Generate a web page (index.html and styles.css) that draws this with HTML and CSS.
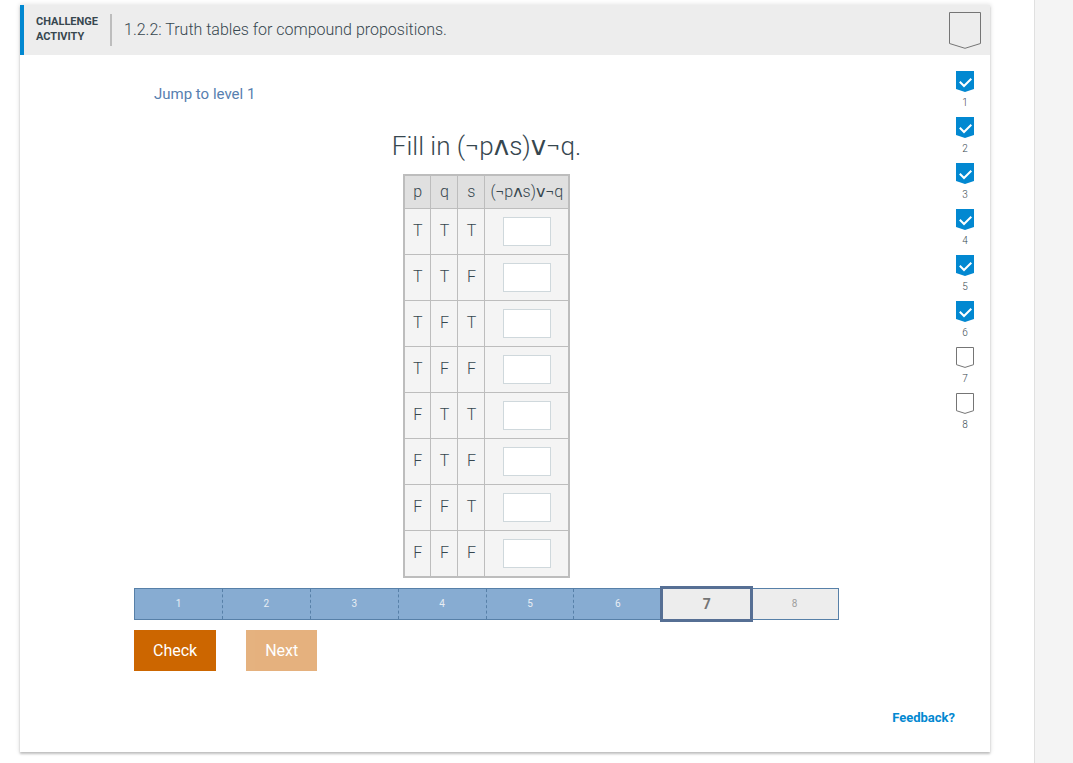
FILE: index.html
```html
<!DOCTYPE html>
<html lang="en">
<head>
    <meta charset="UTF-8" />
    <meta name="viewport" content="width=device-width, initial-scale=1.0" />
    <title>1.2.2: Truth tables for compound propositions</title>
    <link rel="stylesheet" href="styles.css">
</head>
<body>
    <svg class="defs" aria-hidden="true">
        <symbol id="done" viewBox="0 0 18 21">
            <path d="M0 0H18V18L9 21L0 18Z" fill="#0288d1" />
            <path d="M3.800 10.800L8 15L15.300 7.700" fill="none" stroke="#fff" stroke-width="2" />
        </symbol>
        <symbol id="todo" viewBox="0 0 18 21">
            <path d="M0.500 0.500H17.500V17.700L9 20.400L0.500 17.700Z" fill="#fff" stroke="#757575" />
        </symbol>
    </svg>
    <main class="page">
        <section class="card">
            <header class="card-header">
                <div class="label">CHALLENGE<br>ACTIVITY</div>
                <h1 class="title">1.2.2: Truth tables for compound propositions.</h1>
                <svg class="chevron" width="32" height="37" viewBox="0 0 32 37">
                    <path d="M0.500 0.500H31.500V31.500L16 36.300L0.500 31.500Z" fill="none" stroke="#757575" />
                </svg>
            </header>
            <div class="card-body">
                <div class="content">
                    <a class="jump" href="#">Jump to level 1</a>
                    <h2 class="question">Fill in (¬p<span class="op">ʌ</span>s)<span class="op">v</span>¬q.</h2>
                    <table class="truth-table">
                        <thead>
                            <tr><th>p</th><th>q</th><th>s</th><th>(¬p<span class="op">ʌ</span>s)<span class="op">v</span>¬q</th></tr>
                        </thead>
                        <tbody>
                            <tr><td>T</td><td>T</td><td>T</td><td><input type="text" aria-label="Row 1"></td></tr>
                            <tr><td>T</td><td>T</td><td>F</td><td><input type="text" aria-label="Row 2"></td></tr>
                            <tr><td>T</td><td>F</td><td>T</td><td><input type="text" aria-label="Row 3"></td></tr>
                            <tr><td>T</td><td>F</td><td>F</td><td><input type="text" aria-label="Row 4"></td></tr>
                            <tr><td>F</td><td>T</td><td>T</td><td><input type="text" aria-label="Row 5"></td></tr>
                            <tr><td>F</td><td>T</td><td>F</td><td><input type="text" aria-label="Row 6"></td></tr>
                            <tr><td>F</td><td>F</td><td>T</td><td><input type="text" aria-label="Row 7"></td></tr>
                            <tr><td>F</td><td>F</td><td>F</td><td><input type="text" aria-label="Row 8"></td></tr>
                        </tbody>
                    </table>
                    <div class="levels">
                        <div class="level filled">1</div>
                        <div class="level filled">2</div>
                        <div class="level filled">3</div>
                        <div class="level filled">4</div>
                        <div class="level filled">5</div>
                        <div class="level filled">6</div>
                        <div class="level current">7</div>
                        <div class="level">8</div>
                    </div>
                    <div class="buttons">
                        <button type="button">Check</button>
                        <button type="button" disabled>Next</button>
                    </div>
                </div>
                <ol class="rail">
                    <li><svg><use href="#done" /></svg>1</li>
                    <li><svg><use href="#done" /></svg>2</li>
                    <li><svg><use href="#done" /></svg>3</li>
                    <li><svg><use href="#done" /></svg>4</li>
                    <li><svg><use href="#done" /></svg>5</li>
                    <li><svg><use href="#done" /></svg>6</li>
                    <li><svg><use href="#todo" /></svg>7</li>
                    <li><svg><use href="#todo" /></svg>8</li>
                </ol>
            </div>
            <footer class="card-footer">
                <a class="feedback" href="#">Feedback?</a>
            </footer>
        </section>
    </main>
    <aside class="gutter"></aside>
</body>
</html>
```

FILE: styles.css
```css
* {
    margin: 0;
    padding: 0;
    box-sizing: border-box;
}

body {
    display: flex;
    min-height: 100vh;
    background: #fff;
    color: #37474f;
    font-family: Roboto, sans-serif;
    font-size: 16px;
    font-weight: 300;
    line-height: 20px;
}

a {
    text-decoration: none;
}

.defs {
    position: absolute;
    width: 0;
    height: 0;
}

.page {
    flex: 1;
    padding: 5px 44px 10px 20px;
}

.gutter {
    width: 39px;
    background: #f4f4f4;
    border-left: 1px solid #e0e0e0;
}

.card {
    box-shadow: 0 2px 2px rgba(0, 0, 0, 0.2), 0 0 4px 1px rgba(0, 0, 0, 0.1);
}

.card-header {
    display: flex;
    align-items: center;
    height: 50px;
    padding-right: 9px;
    border-left: 4px solid #0288d1;
    background: #ededed;
}

.label {
    padding: 0 12px 2px;
    border-right: 2px solid #bdbdbd;
    font-size: 11px;
    font-weight: 700;
    line-height: 15px;
}

.title {
    flex: 1;
    padding-left: 12px;
    font-size: 16px;
    font-weight: 300;
}

.card-body {
    display: flex;
    justify-content: space-between;
    padding: 16px 16px 0 114px;
}

.content {
    flex: 1;
    padding-top: 13px;
    margin-right: 117px;
}

.jump {
    display: block;
    padding-left: 20px;
    color: #5780b0;
    font-size: 15px;
    font-weight: 400;
}

.question {
    margin-top: 24px;
    font-size: 26px;
    font-weight: 300;
    line-height: 36px;
    text-align: center;
}

.op {
    font-family: "DejaVu Sans", sans-serif;
    font-weight: 400;
    line-height: 1;
}

.truth-table {
    margin: 10px auto;
    border: 2px solid #bdbdbd;
    border-collapse: collapse;
    background: #f4f4f4;
    text-align: center;
}

.truth-table th {
    height: 33px;
    padding: 0 5px;
    border: 1px solid #bdbdbd;
    background: #e0e0e0;
    font-weight: 300;
}

.truth-table td {
    min-width: 27px;
    height: 46px;
    border: 1px solid #bdbdbd;
}

.truth-table tr:last-child td {
    height: 47px;
}

.truth-table input {
    display: block;
    width: 48px;
    height: 29px;
    margin: 0 auto;
    border: 1px solid #cfd8dc;
    background: #fff;
    font: inherit;
    text-align: center;
}

.levels {
    display: flex;
    height: 32px;
    border: 1px solid #5780a8;
}

.level {
    display: flex;
    flex: 1;
    align-items: center;
    justify-content: center;
    background: #ededed;
    color: #9e9e9e;
    font-size: 10px;
    font-weight: 400;
}

.level.filled {
    border-right: 1px dashed #5780a8;
    background: #87acd2;
    color: #e8eef4;
}

.level.current {
    z-index: 1;
    margin: -3px -2px;
    border: 3px solid #566f94;
    color: #757575;
    font-size: 14px;
    font-weight: 700;
}

.buttons {
    display: flex;
    gap: 30px;
    margin-top: 10px;
}

.buttons button {
    height: 41px;
    padding: 0 19px;
    border: none;
    background: #cc6600;
    color: #fff;
    font-family: inherit;
    font-size: 16px;
    font-weight: 400;
    cursor: pointer;
}

.buttons button:disabled {
    opacity: 0.5;
    cursor: default;
}

.rail {
    list-style: none;
    color: #37474f;
    font-size: 10px;
    line-height: 22px;
    text-align: center;
}

.rail li {
    height: 46px;
}

.rail svg {
    display: block;
    width: 18px;
    height: 21px;
}

.card-footer {
    padding: 36px 35px 24px;
    text-align: right;
}

.feedback {
    color: #0288d1;
    font-size: 13px;
    font-weight: 700;
}
```
